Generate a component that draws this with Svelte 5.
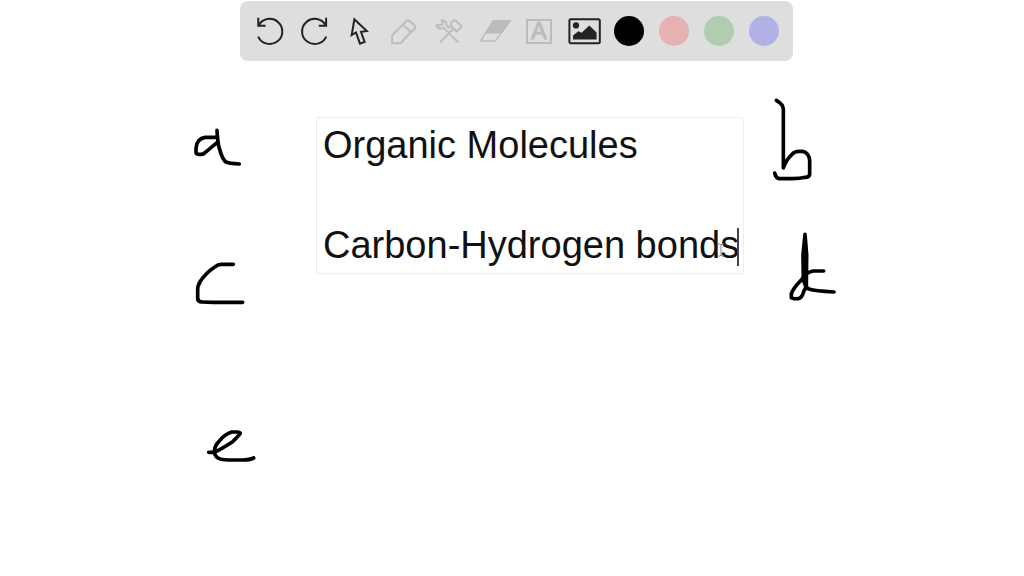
<script>
  const swatches = [
    { name: 'Black', color: '#000000' },
    { name: 'Red', color: '#e6b1b1' },
    { name: 'Green', color: '#b0cdb0' },
    { name: 'Blue', color: '#b1b1e6' }
  ];

  // Pen strokes, recorded at three units per canvas pixel.
  const drawings = [
    { label: 'a', x: 180, y: 115, w: 80, h: 60, d: 'M106 67H76C54 70 49 84 48 100V112Q48 118 56 118H64Q70 118 76 112L112 82M111 46C112 62 113 84 118 100Q126 130 136 140Q146 146 178 147' },
    { label: 'b', x: 760, y: 90, w: 80, h: 100, d: 'M49 31Q70 43 70 58V234C74 222 82 206 96 193Q104 184 116 184H128Q148 190 149 212V252Q149 261 136 262Q120 266 96 266H60Q48 266 44 249' },
    { label: 'c', x: 180, y: 250, w: 80, h: 60, d: 'M160 43H124Q114 43 104 51C88 62 70 80 61 94Q52 108 53 124V144Q53 156 66 156L100 157H188' },
    { label: 'd', x: 775, y: 225, w: 80, h: 85, d: 'M90 28L84 90 85 158C72 174 56 186 49 206V218Q52 222 70 221Q82 218 86 200L94 184L95 90L90 28V140L94 186M146 138H114Q96 142 84 157M84 155Q88 188 104 193Q118 198 177 201' },
    { label: 'e', x: 195, y: 420, w: 80, h: 50, d: 'M41 97H59Q84 84 112 66Q130 48 136 40Q135 36 126 36H110Q90 42 72 64Q58 78 58 96Q60 112 76 117Q88 120 110 120H140Q164 120 176 114' }
  ];

  let color = $state('Black');
  let note = $state('Organic Molecules\n\nCarbon-Hydrogen bonds');
</script>

<main class="board">
  <header>
    <div class="toolbar" role="toolbar" aria-label="Drawing tools">
      <button aria-label="Undo">
        <svg viewBox="0 0 30 30"><path d="M4.3 1.8V9.7H11.6M4.6 9.5A12.6 12.6 0 1 1 4.2 20.6" /></svg>
      </button>
      <button aria-label="Redo">
        <svg viewBox="0 0 30 30"><path d="M27.1 1.8V9.7H19.8M26.8 9.5A12.6 12.6 0 1 0 27.2 20.6" /></svg>
      </button>
      <button aria-label="Select">
        <svg viewBox="0 0 30 30"><path d="M10.4 3.2 7.7 19 12 16.4 16 27.7 20.6 26 17 15.8 22.8 15Z" /></svg>
      </button>
      <button class="muted" aria-label="Pen">
        <svg viewBox="0 0 30 30"><path d="M3.2 27.2V19.3L18 4.6Q19 3.8 20 4.6L26.2 10Q27 11 26.2 12L11.4 27.2ZM13.8 8.8 22 16.2" /></svg>
      </button>
      <button class="muted" aria-label="Tools">
        <svg viewBox="0 0 30 30">
          <path d="M7 4Q12.4 4 12.6 9.4L15.6 12.4M2.4 8.2Q2.8 12.8 7.3 12.6L9.8 11.8 24.4 26.6M7 4 8.8 6.6Q8.4 9.6 5 9.2L2.4 8.2M6 26.6 19.4 12.6M16.4 9.8 17.6 6.4Q19.6 4 21.6 4.4L27.4 9.8Q27 12.4 23.8 14.4L22.4 15.4Z" />
        </svg>
      </button>
      <button class="muted" aria-label="Eraser">
        <svg viewBox="0 0 30 30">
          <path class="solid" d="M14.2 4.7H31.4L21.5 17.4H6.5Z" />
          <path class="thin" d="M14.2 4.7H31.4L16.4 25H1.5Z" />
        </svg>
      </button>
      <button class="muted" aria-label="Text">
        <svg viewBox="0 0 30 30"><path d="M3 4H27V27H3Z" /><text x="15" y="23" text-anchor="middle">A</text></svg>
      </button>
      <button aria-label="Insert image">
        <svg viewBox="0 0 30 30">
          <rect x="0.4" y="3.2" width="30.4" height="24" rx="1.5" />
          <circle class="solid" cx="7" cy="9.4" r="3.1" />
          <path class="solid" d="M4 23.4V19.5L9.3 15.3 12.7 16.8 20.3 9.6 27.6 16.5V23.4Z" />
        </svg>
      </button>
      {#each swatches as s}
        <button
          class="swatch"
          style:background={s.color}
          aria-label={s.name}
          aria-pressed={color === s.name}
          onclick={() => (color = s.name)}
        ></button>
      {/each}
    </div>
  </header>

  {#each drawings as g}
    <svg
      class="ink"
      role="img"
      aria-label={g.label}
      style:left="{g.x}px"
      style:top="{g.y}px"
      width={g.w}
      height={g.h}
      viewBox="0 0 {g.w * 3} {g.h * 3}"
    ><path d={g.d} /></svg>
  {/each}

  <div class="note">
    <textarea aria-label="Text note" rows="3" spellcheck="false" bind:value={note}></textarea>
    <span class="caret"></span>
    <svg class="ibeam" viewBox="0 0 8 14" width="8" height="14" aria-hidden="true">
      <path d="M1 1H3L4 2 5 1H7M4 2V12M1 13H3L4 12 5 13H7" />
    </svg>
  </div>
</main>

<style>
  :global(body) {
    margin: 0;
    background: #fff;
  }

  .board {
    position: relative;
    min-height: 100vh;
    overflow: hidden;
    font-family: "Liberation Sans", Arial, sans-serif;
  }

  header {
    display: flex;
    justify-content: center;
    padding: 1px 0 0 9px;
  }

  .toolbar {
    display: flex;
    align-items: center;
    gap: 15px;
    padding: 15px 14px;
    border-radius: 8px;
    background: #dedede;
  }

  button {
    width: 30px;
    height: 30px;
    padding: 0;
    border: 0;
    background: none;
    color: #222326;
    cursor: pointer;
  }

  button svg {
    display: block;
    width: 30px;
    height: 30px;
    overflow: visible;
    fill: none;
    stroke: currentColor;
    stroke-width: 2;
  }

  .muted {
    color: #bcbcbc;
  }

  .solid {
    fill: currentColor;
    stroke: none;
  }

  .thin {
    stroke-width: 1.5;
  }

  text {
    font: 23px "Liberation Sans", Arial, sans-serif;
    fill: currentColor;
    stroke-width: 1;
  }

  .swatch {
    border-radius: 50%;
  }

  .ink {
    position: absolute;
    fill: none;
    stroke: #000;
    stroke-width: 11;
    stroke-linecap: round;
    stroke-linejoin: round;
  }

  .note {
    position: absolute;
    left: 316px;
    top: 117px;
  }

  textarea {
    display: block;
    box-sizing: border-box;
    width: 428px;
    padding: 2px 4px 3px 6px;
    border: 1px solid #ececf1;
    border-radius: 2px;
    outline: none;
    resize: none;
    overflow: hidden;
    white-space: pre;
    background: transparent;
    color: #111;
    font: 38px/50px "Liberation Sans", Arial, sans-serif;
  }

  .caret {
    position: absolute;
    right: 5px;
    bottom: 8px;
    width: 2px;
    height: 38px;
    background: #444;
  }

  .ibeam {
    position: absolute;
    right: 19px;
    bottom: 17px;
    fill: none;
    stroke: #888;
  }
</style>
